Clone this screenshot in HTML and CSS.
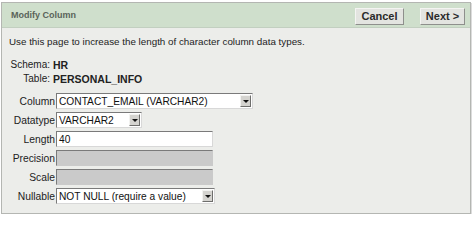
FILE: index.html
```html
<!DOCTYPE html>
<html>
<head>
<meta charset="utf-8">
<link rel="stylesheet" href="styles.css">
</head>
<body>
<div class="panel">
  <div class="header">
    <span class="title">Modify Column</span>
    <div class="buttons">
      <button class="btn">Cancel</button>
      <button class="btn">Next &gt;</button>
    </div>
  </div>
  <div class="content">
    <p class="intro">Use this page to increase the length of character column data types.</p>
    <div class="info">
      <span class="info-label">Schema:</span><span class="info-value">HR</span>
      <span class="info-label">Table:</span><span class="info-value">PERSONAL_INFO</span>
    </div>
    <div class="form">
      <label class="lbl">Column</label>
      <div class="select w-column"><span class="sel-text">CONTACT_EMAIL (VARCHAR2)</span><span class="arrow"></span></div>
      <label class="lbl">Datatype</label>
      <div class="select w-datatype"><span class="sel-text">VARCHAR2</span><span class="arrow"></span></div>
      <label class="lbl">Length</label>
      <div class="input w-input">40</div>
      <label class="lbl">Precision</label>
      <div class="input w-input disabled"></div>
      <label class="lbl">Scale</label>
      <div class="input w-input disabled"></div>
      <label class="lbl">Nullable</label>
      <div class="select w-nullable"><span class="sel-text">NOT NULL (require a value)</span><span class="arrow"></span></div>
    </div>
  </div>
</div>
</body>
</html>
```
FILE: styles.css
```css
html, body {
  margin: 0;
  padding: 0;
  background: #ffffff;
}
body {
  font-family: "Liberation Sans", Arial, sans-serif;
  font-size: 10px;
  color: #222;
}
.panel {
  margin: 2px 3px 0 1px;
  width: 468px;
  height: 210px;
  border: 1px solid #b4b6b2;
  box-shadow: 1px 1px 0 #dcdcdc;
  background: #ecedea;
  display: flex;
  flex-direction: column;
}
.header {
  height: 25px;
  background: #cfdfcc;
  border-bottom: 1px solid #c2cfc0;
  display: flex;
  align-items: center;
  justify-content: space-between;
  padding: 0 5px 0 9px;
  box-sizing: border-box;
}
.title {
  font-weight: bold;
  color: #5a635a;
  font-size: 9px;
}
.buttons {
  display: flex;
  gap: 16px;
  padding-top: 2px;
}
.btn {
  font-family: "Liberation Sans", Arial, sans-serif;
  font-weight: bold;
  font-size: 11px;
  color: #2a2a2a;
  background: #e3e4e0;
  border: 1px solid;
  border-color: #f4f4f2 #8e8f8c #8e8f8c #f4f4f2;
  height: 17px;
  padding: 0 4px;
  margin: 0;
}
.btn:first-child { width: 49px; }
.btn:last-child { width: 45px; }
.content {
  padding: 0 0 0 7px;
}
.intro {
  margin: 8px 0 0 0;
  font-size: 9.8px;
}
.info {
  display: grid;
  grid-template-columns: 41px auto;
  column-gap: 3px;
  margin-top: 12px;
  row-gap: 2px;
  font-size: 10.5px;
  line-height: 12px;
}
.info-label {
  text-align: right;
  font-size: 10px;
  margin-left: -2px;
}
.info-value {
  font-weight: bold;
}
.form {
  display: grid;
  grid-template-columns: 46px auto;
  column-gap: 1px;
  row-gap: 3px;
  margin-top: 8px;
  justify-items: start;
  align-items: center;
}
.lbl {
  justify-self: end;
  font-size: 10.3px;
}
.select, .input {
  height: 16px;
  box-sizing: border-box;
  background: #fff;
  border: 1px solid;
  border-color: #7a7a7a #d8d8d8 #d8d8d8 #7a7a7a;
  display: flex;
  align-items: center;
  font-size: 10.2px;
  color: #111;
}
.sel-text {
  flex: 1;
  padding-left: 2px;
}
.arrow {
  width: 11px;
  height: 12px;
  margin-right: 1px;
  background: #d4d3cf;
  border: 1px solid;
  border-color: #f2f2f0 #6e6e6c #6e6e6c #f2f2f0;
  box-sizing: border-box;
  position: relative;
}
.arrow::after {
  content: "";
  position: absolute;
  left: 2px;
  top: 4px;
  border-left: 3px solid transparent;
  border-right: 3px solid transparent;
  border-top: 3px solid #111;
}
.w-column { width: 197px; }
.w-datatype { width: 86px; }
.w-nullable { width: 159px; }
.w-input { width: 157px; padding-left: 2px; height: 16px; }
.input.disabled {
  background: #cacaca;
  border-color: #7a7a7a #cacaca #cacaca #7a7a7a;
}
```
